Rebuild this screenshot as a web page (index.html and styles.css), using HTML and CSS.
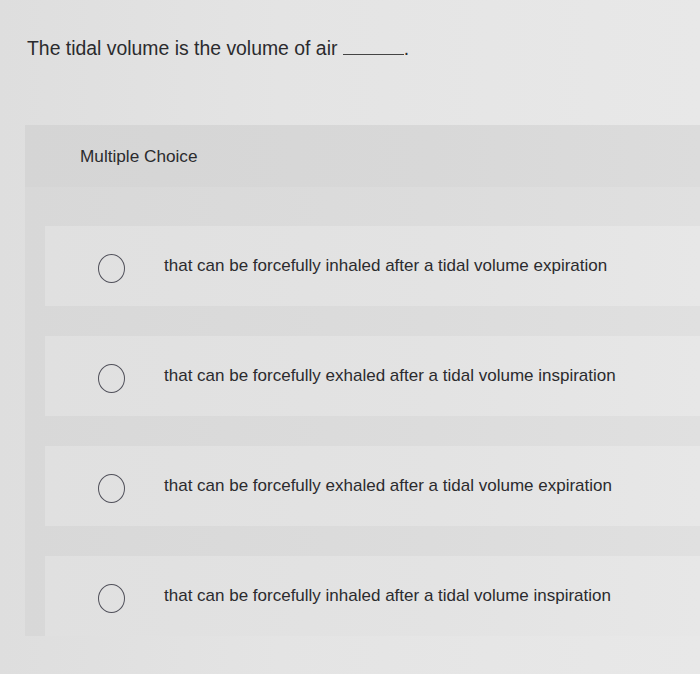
FILE: index.html
```html
<!DOCTYPE html>
<html>
<head>
<meta charset="utf-8">
<link rel="stylesheet" href="styles.css">
</head>
<body>
<div class="page">
  <p class="question">The tidal volume is the volume of air <span class="blank"></span>.</p>
  <section class="panel">
    <div class="panel-head">Multiple Choice</div>
    <ul class="options">
      <li class="option"><span class="radio"></span><span class="label">that can be forcefully inhaled after a tidal volume expiration</span></li>
      <li class="option"><span class="radio"></span><span class="label">that can be forcefully exhaled after a tidal volume inspiration</span></li>
      <li class="option"><span class="radio"></span><span class="label">that can be forcefully exhaled after a tidal volume expiration</span></li>
      <li class="option"><span class="radio"></span><span class="label">that can be forcefully inhaled after a tidal volume inspiration</span></li>
    </ul>
  </section>
</div>
</body>
</html>
```

FILE: styles.css
```css
html, body {
  margin: 0;
  padding: 0;
}
body {
  width: 700px;
  height: 674px;
  overflow: hidden;
  background: linear-gradient(90deg, #dedede 0%, #e4e4e4 40%, #e8e8e8 100%);
  font-family: "Liberation Sans", Arial, sans-serif;
  color: #2b2b2e;
}
.page {
  display: flex;
  flex-direction: column;
}
.question {
  margin: 0;
  padding: 36px 0 0 27px;
  height: 89px;
  box-sizing: border-box;
  font-size: 19.4px;
  line-height: 24px;
}
.blank {
  display: inline-block;
  width: 61px;
  height: 1px;
  background: #444;
  vertical-align: baseline;
  margin-left: 0;
}
.panel {
  margin-left: 25px;
  margin-top: 36px;
  background: #d9d9d9;
  display: flex;
  flex-direction: column;
}
.panel-head {
  height: 62px;
  display: flex;
  align-items: center;
  padding-left: 55px;
  background: linear-gradient(90deg, #d5d5d5, #d8d8d8 60%, #dcdcdc);
  font-size: 17.2px;
}
.options {
  list-style: none;
  margin: 0;
  padding: 39px 0 0 20px;
  display: flex;
  flex-direction: column;
  gap: 30px;
  background: linear-gradient(90deg, #d8d8d8, #dcdcdc 60%, #e0e0e0);
}
.option {
  height: 80px;
  display: flex;
  align-items: center;
  background: linear-gradient(90deg, #e0e0e0, #e3e3e3 60%, #e7e7e7);
}
.radio {
  width: 25px;
  height: 27px;
  border: 1.5px solid #50505a;
  border-radius: 50%;
  margin-left: 53px;
  margin-top: 4px;
  flex: none;
}
.label {
  margin-left: 39px;
  font-size: 17px;
}
```
